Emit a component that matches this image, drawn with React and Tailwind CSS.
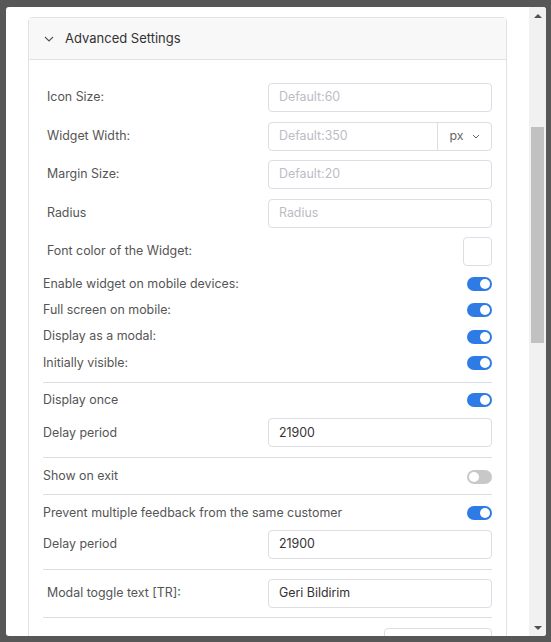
import React from 'react'

const FONT = { fontFamily: 'Inter, "Open Sans", sans-serif' }

function Toggle({ on = true }) {
  return (
    <div className={`w-[25px] h-[14px] rounded-full flex items-center px-[2px] ${on ? 'bg-[#2f7be5] justify-end' : 'bg-[#c8c8c8] justify-start'}`}>
      <div className="w-[10px] h-[10px] rounded-full bg-white" />
    </div>
  )
}

function Input({ value, placeholder, suffix }) {
  return (
    <div className="w-[224px] h-[29px] border border-[#dddde6] rounded-[4px] flex items-center bg-white">
      <div className={`flex-1 px-[10px] text-[12.4px] ${value ? 'text-[#333]' : 'text-[#bcbcc4]'}`}>{value || placeholder}</div>
      {suffix && (
        <div className="h-full w-[54px] border-l border-[#dddde6] flex items-center justify-center gap-[8px] text-[12.4px] text-[#666]">
          <span>{suffix}</span>
          <svg width="8" height="5" viewBox="0 0 8 5" fill="none"><path d="M1 1l3 3 3-3" stroke="#666" strokeWidth="1" /></svg>
        </div>
      )}
    </div>
  )
}

function FieldRow({ label, children }) {
  return (
    <div className="flex items-center justify-between pl-[4px]">
      <span className="text-[12.4px] text-[#555]">{label}</span>
      {children}
    </div>
  )
}

function ToggleRow({ label, on }) {
  return (
    <div className="h-[26.3px] flex items-center justify-between">
      <span className="text-[12.4px] text-[#555]">{label}</span>
      <Toggle on={on} />
    </div>
  )
}

function Divider() {
  return <div className="h-px bg-[#dcdce4]" />
}

export default function App() {
  return (
    <div className="w-[551px] h-[642px] bg-[#575757] overflow-hidden pt-[7px] pl-[6px]" style={FONT}>
      <div className="w-[540px] h-[629px] bg-white rounded-[3px] flex overflow-hidden">
        <div className="flex-1 overflow-hidden pt-[10px] pl-[22px] pr-[22px]">
          <div className="border border-[#e2e2e6] rounded-[4px]">
            <div className="h-[42px] bg-[#f8f8f8] border-b border-[#e2e2e6] flex items-center pl-[15px] gap-[11px]">
              <svg width="10" height="6" viewBox="0 0 10 6" fill="none"><path d="M1 1l4 4 4-4" stroke="#555" strokeWidth="1.1" /></svg>
              <span className="text-[13px] text-[#333]">Advanced Settings</span>
            </div>
            <div className="px-[14px] pt-[23px]">
              <div className="flex flex-col gap-[9.5px]">
                <FieldRow label="Icon Size:"><Input placeholder="Default:60" /></FieldRow>
                <FieldRow label="Widget Width:"><Input placeholder="Default:350" suffix="px" /></FieldRow>
                <FieldRow label="Margin Size:"><Input placeholder="Default:20" /></FieldRow>
                <FieldRow label="Radius"><Input placeholder="Radius" /></FieldRow>
                <FieldRow label="Font color of the Widget:">
                  <div className="w-[29px] h-[29px] border border-[#dddde6] rounded-[4px] bg-white" />
                </FieldRow>
              </div>
              <div className="mt-[5px]">
                <ToggleRow label="Enable widget on mobile devices:" />
                <ToggleRow label="Full screen on mobile:" />
                <ToggleRow label="Display as a modal:" />
                <ToggleRow label="Initially visible:" />
              </div>
              <div className="mt-[6px]"><Divider /></div>
              <div className="pt-[4px] pb-[10px]">
                <ToggleRow label="Display once" />
                <div className="mt-[5px] flex items-center justify-between">
                  <span className="text-[12.4px] text-[#555]">Delay period</span>
                  <Input value="21900" />
                </div>
              </div>
              <Divider />
              <div className="pt-[5px] pb-[4px]">
                <ToggleRow label="Show on exit" on={false} />
              </div>
              <Divider />
              <div className="pt-[5px] pb-[10px]">
                <ToggleRow label="Prevent multiple feedback from the same customer" />
                <div className="mt-[4px] flex items-center justify-between">
                  <span className="text-[12.4px] text-[#555]">Delay period</span>
                  <Input value="21900" />
                </div>
              </div>
              <Divider />
              <div className="py-[9px]">
                <FieldRow label="Modal toggle text [TR]:"><Input value="Geri Bildirim" /></FieldRow>
              </div>
              <Divider />
              <div className="pt-[10px] flex items-start justify-between pl-[4px]">
                <span className="text-[12.4px] text-[#555] mt-[8px] whitespace-nowrap">Enable translations</span>
                <div className="w-[108px] h-[29px] border border-[#dddde6] rounded-[4px] flex items-center gap-[6px] px-[12px] text-[12.4px] text-[#555] whitespace-nowrap">
                  <span className="w-[3px] h-[10px] bg-[#2f7be5]" />
                  <span>Add language</span>
                </div>
              </div>
            </div>
          </div>
        </div>
        <div className="w-[17px] h-full bg-[#f1f1f1] flex flex-col items-center">
          <div className="h-[17px] w-full flex items-center justify-center">
            <svg width="8" height="4" viewBox="0 0 8 4"><path d="M0 4L4 0L8 4Z" fill="#505050" /></svg>
          </div>
          <div className="mt-[103px] w-[13px] h-[216px] bg-[#c1c1c1]" />
          <div className="flex-1" />
          <div className="h-[17px] w-full flex items-center justify-center">
            <svg width="8" height="4" viewBox="0 0 8 4"><path d="M0 0L8 0L4 4Z" fill="#505050" /></svg>
          </div>
        </div>
      </div>
    </div>
  )
}
